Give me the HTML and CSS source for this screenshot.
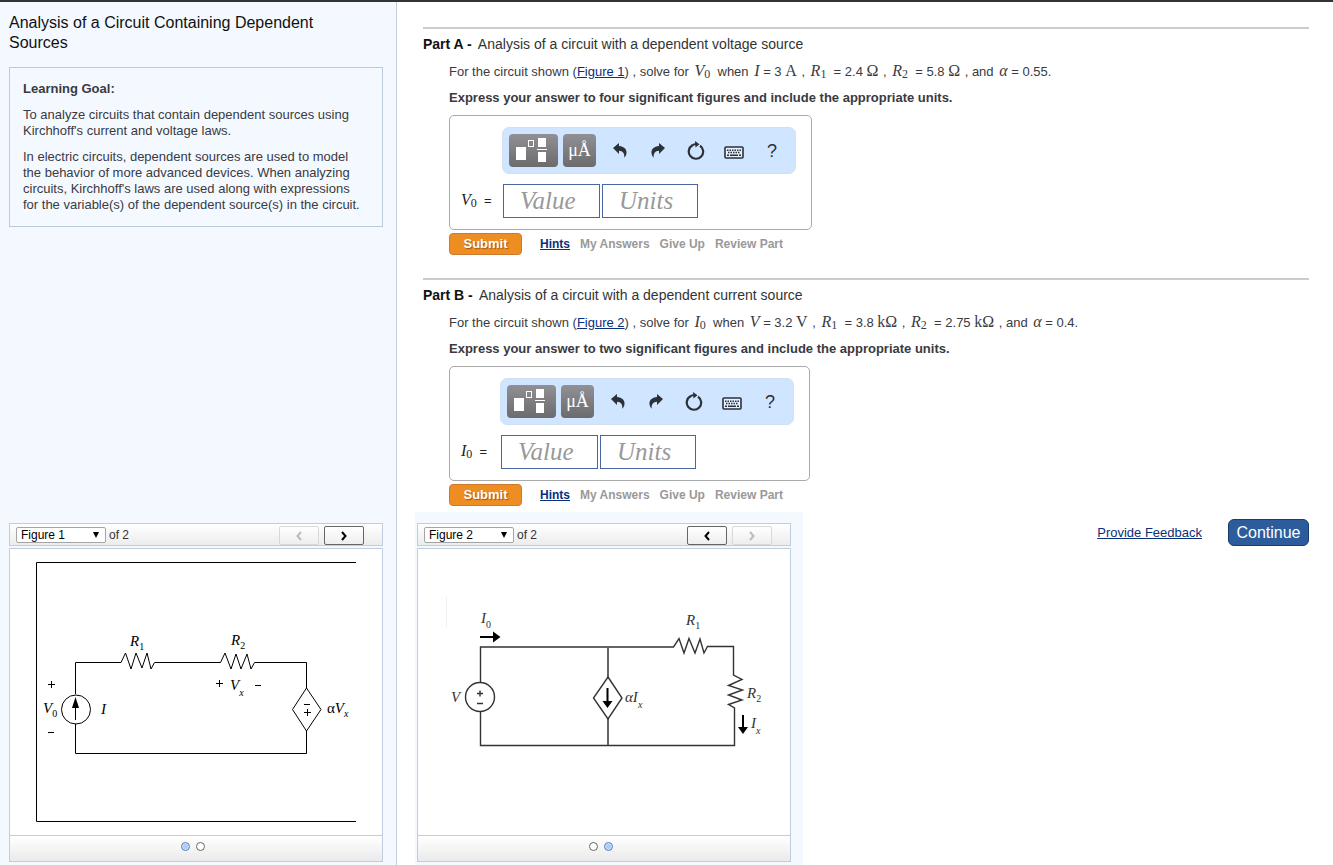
FILE: index.html
```html
<!DOCTYPE html>
<html lang="en">
<head>
<meta charset="utf-8">
<title>Analysis of a Circuit Containing Dependent Sources</title>
<link rel="stylesheet" href="styles.css">
</head>
<body>
<svg class="defs" aria-hidden="true">
  <symbol id="i-template" viewBox="0 0 49 33">
    <rect x="7" y="13" width="10" height="13" fill="#fff"/>
    <rect x="19.500" y="6.500" width="5" height="6" fill="none" stroke="#fff"/>
    <rect x="29" y="4" width="8" height="9" fill="#fff"/>
    <rect x="28" y="15" width="10" height="1" fill="#fff"/>
    <rect x="29" y="18" width="8" height="10" fill="#fff"/>
  </symbol>
  <symbol id="i-undo" viewBox="0 0 14 15"><path d="M0 5 6 0v3c5 .3 8 3.400 7.500 7-.2 2-1 3.500-2.300 4.800C11.800 10.500 10 8 6 7.800V11z"/></symbol>
  <symbol id="i-redo" viewBox="0 0 14 15"><path d="M14 5 8 0v3C3 3.300 0 6.400.5 10c.2 2 1 3.500 2.300 4.800C2.200 10.500 4 8 8 7.800V11z"/></symbol>
  <symbol id="i-reset" viewBox="0 0 18 19"><path d="M13 4.600A7.200 7.200 0 1 1 5.400 4.300" fill="none" stroke="#2c3138" stroke-width="2.200"/><path d="M5 4.600Q7 3.100 9.500 3.100" fill="none" stroke="#2c3138" stroke-width="2"/><path d="M8 0l4.500 3.200L8.500 6.500z"/></symbol>
  <symbol id="i-keys" viewBox="0 0 20 13"><rect x="1" y="1" width="18" height="11" rx="1" fill="#e4efff" stroke="#2c3138" stroke-width="1.600"/><path d="M3 4.300h14M4 6.500h12" stroke="#2c3138" stroke-width="1.400" stroke-dasharray="1.500 1"/><path d="M3 9.200h2m1 0h8m1 0h2" stroke="#2c3138" stroke-width="1.600"/></symbol>
  <symbol id="i-prev" viewBox="0 0 8 10"><path d="M6 1 2.500 5 6 9" fill="none" stroke="currentColor" stroke-width="2"/></symbol>
  <symbol id="i-next" viewBox="0 0 8 10"><path d="M2 1 5.500 5 2 9" fill="none" stroke="currentColor" stroke-width="2"/></symbol>
</svg>

<div class="page">
  <aside class="sidebar">
    <h1 class="title">Analysis of a Circuit Containing Dependent Sources</h1>
    <section class="goal">
      <h2>Learning Goal:</h2>
      <p>To analyze circuits that contain dependent sources using Kirchhoff's current and voltage laws.</p>
      <p>In electric circuits, dependent sources are used to model the behavior of more advanced devices. When analyzing circuits, Kirchhoff's laws are used along with expressions for the variable(s) of the dependent source(s) in the circuit.</p>
    </section>

    <section class="figure figure-side">
      <div class="figure-bar">
        <span class="picker"><select id="fig1" aria-label="Figure"><option>Figure 1</option><option>Figure 2</option></select><svg viewBox="0 0 6 6" aria-hidden="true"><path d="M0 0h6L3 6z"/></svg></span>
        <label for="fig1">of 2</label>
        <button class="nav" disabled aria-label="Previous figure"><svg><use href="#i-prev"/></svg></button>
        <button class="nav" aria-label="Next figure"><svg><use href="#i-next"/></svg></button>
      </div>
      <div class="figure-panel">
        <svg class="circuit" viewBox="10 549 372 286" role="img" aria-label="Circuit with a dependent voltage source">
          <g fill="none" stroke="#000" stroke-width="1">
            <path d="M356 562.500H36.500V821.500H356"/>
            <path d="M75.500 694V662.500H121L125.500 653 131 669 136 653 142 668 147 653 151 669 154.500 662.500H220.500L225 653 231 669 236 654 241 669 247 654 251 669 254.500 662.500H306.500V688M306.500 731V753.500H75.500V724"/>
            <circle cx="76" cy="709.500" r="14.500"/>
            <path d="M306.500 688 321 709.500 306.500 731 292.500 709.500z"/>
            <path d="M75.500 720V706M304 704.500h6M304 712.500h7M307.500 709v7M48 684.500h7M51.500 681v7M48 732.500h6M216 683.500h7M219.500 680v7M255 685.500h6"/>
          </g>
          <path d="M75.500 697 72 708h7z"/>
          <g class="sym">
            <text x="130" y="646">R<tspan class="sub" dy="4">1</tspan></text>
            <text x="231" y="645">R<tspan class="sub" dy="4">2</tspan></text>
            <text x="230" y="690">V<tspan class="subi" dy="6">x</tspan></text>
            <text x="43" y="713">V<tspan class="sub" dy="4">0</tspan></text>
            <text x="101" y="714">I</text>
            <text x="327" y="713"><tspan class="up">α</tspan>V<tspan class="subi" dy="4">x</tspan></text>
          </g>
        </svg>
        <div class="dots"><span class="dot on"></span><span class="dot"></span></div>
      </div>
    </section>
  </aside>

  <main class="main">
    <section class="part">
      <h2><b>Part A -</b> Analysis of a circuit with a dependent voltage source</h2>
      <p class="given">For the circuit shown (<a href="#fig1">Figure 1</a>) , solve for <var>V</var><sub>0</sub>&nbsp; when <var>I</var> = 3 <span class="unit">A</span> , <var>R</var><sub>1</sub>&nbsp; = 2.4 <span class="unit">Ω</span> , <var>R</var><sub>2</sub>&nbsp; = 5.8 <span class="unit">Ω</span> , and <var>α</var> = 0.55.</p>
      <p class="ask">Express your answer to four significant figures and include the appropriate units.</p>
      <div class="answer answer-wide">
        <div class="toolbar">
          <button class="tool wide" aria-label="Templates"><svg><use href="#i-template"/></svg></button>
          <button class="tool">μÅ</button>
          <button class="act" aria-label="Undo"><svg class="arrow"><use href="#i-undo"/></svg></button>
          <button class="act" aria-label="Redo"><svg class="arrow"><use href="#i-redo"/></svg></button>
          <button class="act" aria-label="Reset"><svg class="reset"><use href="#i-reset"/></svg></button>
          <button class="act" aria-label="Keyboard shortcuts"><svg class="keys"><use href="#i-keys"/></svg></button>
          <button class="act">?</button>
        </div>
        <label for="v0"><var>V</var><sub>0</sub>&nbsp; =</label>
        <div class="fields"><input id="v0" placeholder="Value"><input class="units" aria-label="Units" placeholder="Units"></div>
      </div>
      <div class="actions">
        <button class="submit">Submit</button>
        <a href="#">Hints</a><span>My Answers</span><span>Give Up</span><span>Review Part</span>
      </div>
    </section>

    <section class="part">
      <h2><b>Part B -</b> Analysis of a circuit with a dependent current source</h2>
      <p class="given">For the circuit shown (<a href="#fig2">Figure 2</a>) , solve for <var>I</var><sub>0</sub>&nbsp; when <var>V</var> = 3.2 <span class="unit">V</span> , <var>R</var><sub>1</sub>&nbsp; = 3.8 <span class="unit">kΩ</span> , <var>R</var><sub>2</sub>&nbsp; = 2.75 <span class="unit">kΩ</span> , and <var>α</var> = 0.4.</p>
      <p class="ask">Express your answer to two significant figures and include the appropriate units.</p>
      <div class="answer">
        <div class="toolbar">
          <button class="tool wide" aria-label="Templates"><svg><use href="#i-template"/></svg></button>
          <button class="tool">μÅ</button>
          <button class="act" aria-label="Undo"><svg class="arrow"><use href="#i-undo"/></svg></button>
          <button class="act" aria-label="Redo"><svg class="arrow"><use href="#i-redo"/></svg></button>
          <button class="act" aria-label="Reset"><svg class="reset"><use href="#i-reset"/></svg></button>
          <button class="act" aria-label="Keyboard shortcuts"><svg class="keys"><use href="#i-keys"/></svg></button>
          <button class="act">?</button>
        </div>
        <label for="i0"><var>I</var><sub>0</sub>&nbsp; =</label>
        <div class="fields"><input id="i0" placeholder="Value"><input class="units" aria-label="Units" placeholder="Units"></div>
      </div>
      <div class="actions">
        <button class="submit">Submit</button>
        <a href="#">Hints</a><span>My Answers</span><span>Give Up</span><span>Review Part</span>
      </div>
    </section>

    <div class="bottom">
      <section class="figure figure-main">
        <div class="figure-bar">
          <span class="picker"><select id="fig2" aria-label="Figure"><option>Figure 2</option><option>Figure 1</option></select><svg viewBox="0 0 6 6" aria-hidden="true"><path d="M0 0h6L3 6z"/></svg></span>
          <label for="fig2">of 2</label>
          <button class="nav" aria-label="Previous figure"><svg><use href="#i-prev"/></svg></button>
          <button class="nav" disabled aria-label="Next figure"><svg><use href="#i-next"/></svg></button>
        </div>
        <div class="figure-panel">
          <svg class="circuit" viewBox="418 549 372 286" role="img" aria-label="Circuit with a dependent current source">
            <path d="M446.500 597v30" stroke="#eee"/>
            <g fill="none" stroke="#333" stroke-width="1.400">
              <path d="M480.500 682V647H673.500L679 638.500 684 653 689 638.500 695 653 700 639 704 653 707.500 646.500H733.500V675L742 679.500 728.500 685.500 742.500 690 728.500 695 742 700 728.500 704.500 734.500 708V745.500H480.500V711"/>
              <path d="M608 647V677M608 719V745" stroke="#555" stroke-width="1.800"/>
              <circle cx="480" cy="697" r="14.500"/>
              <path d="M608 677 622 698 608 719 593.500 698z"/>
              <path d="M477 693.500h6M480 690.500v6M477 703.500h6"/>
            </g>
            <g stroke="#000" stroke-width="2"><path d="M480 637h14M607.500 688v14M743 715v14"/></g>
            <path d="M493 631.500l7.500 5.500-7.500 5.500zM602.500 701h10l-5 7zM738 727h10l-5 7z"/>
            <g class="sym gray">
              <text x="481" y="623">I<tspan class="sub" dy="5">0</tspan></text>
              <text x="686" y="625">R<tspan class="sub" dy="4">1</tspan></text>
              <text x="451" y="702">V</text>
              <text x="625" y="702">αI<tspan class="subi" dy="6">x</tspan></text>
              <text x="747" y="698">R<tspan class="sub" dy="4">2</tspan></text>
              <text x="751" y="728">I<tspan class="subi" dy="6">x</tspan></text>
            </g>
          </svg>
          <div class="dots"><span class="dot"></span><span class="dot on"></span></div>
        </div>
      </section>
      <div class="finish">
        <a href="#">Provide Feedback</a>
        <button class="continue">Continue</button>
      </div>
    </div>
  </main>
</div>
</body>
</html>
```

FILE: styles.css
```css
* { box-sizing: border-box; }
body {
  margin: 0;
  font: 13px/16px "Liberation Sans", Arial, sans-serif;
  color: #3a3a3f;
  background: #fff;
}
.defs { display: none; }
h1, h2, p { margin: 0; }
button { font: inherit; padding: 0; cursor: pointer; }
a { color: #0a2f7c; }
.page {
  display: flex;
  min-height: 100vh;
  border-top: 2px solid #333;
}

/* Sidebar */
.sidebar {
  flex: 0 0 397px;
  display: flex;
  flex-direction: column;
  padding: 11px 13px 3px 9px;
  background: #f4f9ff;
  border-right: 1px solid #c3cfdd;
}
.title {
  font-size: 16px;
  line-height: 20px;
  font-weight: normal;
  color: #111;
  padding-right: 20px;
  margin-bottom: 14px;
}
.goal {
  display: grid;
  gap: 10px;
  padding: 13px 20px 13px 13px;
  border: 1px solid #bccadb;
}
.goal h2 { font-size: 13px; line-height: 16px; }

/* Figures */
.figure { display: grid; gap: 2px; }
.figure-side { margin-top: auto; }
.figure-main {
  width: 388px;
  padding: 11px 12px 3px 2px;
  background: #f4f9ff;
}
.figure-bar {
  display: flex;
  align-items: center;
  height: 23px;
  padding: 0 18px 0 6px;
  gap: 5px;
  font-size: 12px;
  color: #333;
  border: 1px solid #bfcede;
  background: linear-gradient(#fff, #ececec);
}
.figure-bar label { flex: 1; }
.picker { position: relative; display: flex; margin-right: -2px; }
.picker svg { position: absolute; right: 7px; top: 5px; width: 6px; height: 6px; pointer-events: none; }
.picker select {
  appearance: none;
  width: 90px;
  height: 16px;
  padding: 0 4px;
  font: 12px/14px "Liberation Sans", Arial, sans-serif;
  color: #000;
  background: #fff;
  border: 1px solid #a5a5a5;
  border-radius: 2px;
}
.nav {
  display: grid;
  place-items: center;
  align-self: flex-end;
  width: 40px;
  height: 19px;
  color: #000;
  background: linear-gradient(#fff, #eee);
  border: 1px solid #666;
  border-radius: 2px;
}
.nav:disabled { color: #bbb; border-color: #d8d8d8; }
.nav svg { width: 8px; height: 10px; }
.figure-panel { border: 1px solid #bfcede; background: #fff; }
.circuit { display: block; width: 100%; height: auto; }
.sym { font: italic 15px "Liberation Serif", "Times New Roman", serif; fill: #000; }
.gray { fill: #333; }
.sub { font-size: 10px; font-style: normal; }
.subi { font-size: 10px; }
.up { font-style: normal; }
.dots {
  display: flex;
  justify-content: center;
  gap: 6px;
  padding: 6px 6px 10px 0;
  border-top: 1px solid #bfcede;
  background: linear-gradient(#fff, #eaeaea);
}
.dot { width: 9px; height: 9px; border: 1px solid #666; border-radius: 50%; background: #fff; }
.dot.on { border-color: #5f83b5; background: #a9cdfa; box-shadow: inset 0 0 0 1px #d4e5fb; }

/* Main column */
.main {
  flex: 1;
  display: flex;
  flex-direction: column;
  padding: 25px 24px 0 26px;
}
.part {
  border-top: 2px solid #ccc;
  padding-top: 5px;
  margin-bottom: 23px;
}
.part:nth-of-type(2) { margin-bottom: 6px; }
.part h2 { font-size: 14px; line-height: 20px; font-weight: normal; color: #333; }
.part h2 b { color: #111; margin-right: 3px; }
.part p { margin-left: 26px; line-height: 20px; }
.part .given { margin-top: 8px; }
.part .ask { margin-top: 6px; margin-bottom: 7px; font-weight: bold; }
var, sub, .unit { font-family: "Liberation Serif", "Times New Roman", serif; line-height: 0; }
var, .unit { font-size: 16px; }
.given var { margin-left: 2px; }
.given .unit { margin-right: 1px; }
sub { font-size: 12px; vertical-align: -2px; }

.answer {
  --label: 39px;
  display: grid;
  grid-template-columns: var(--label) auto;
  row-gap: 10px;
  align-items: center;
  width: fit-content;
  margin-left: 26px;
  padding: 11px 15px 11px 11px;
  border: 1px solid #aaa;
  border-radius: 5px;
}
.answer-wide { --label: 41px; }
.answer label { color: #222; }
.toolbar {
  grid-column: 2;
  display: flex;
  align-items: center;
  width: 294px;
  height: 47px;
  padding-left: 6px;
  background: #d0e5ff;
  border: 1px solid #d3e0f0;
  border-radius: 7px;
}
.tool {
  width: 33px;
  height: 33px;
  margin-right: 5px;
  font: 18px/33px "Liberation Serif", "Times New Roman", serif;
  color: #fff;
  background: linear-gradient(#919195, #6b6b6e);
  border: 0;
  border-radius: 4px;
}
.tool.wide { width: 49px; }
.tool svg { display: block; width: 49px; height: 33px; }
.act {
  display: grid;
  place-items: center;
  width: 38px;
  height: 33px;
  font-size: 18px;
  color: #2c3138;
  background: none;
  border: 0;
}
.act svg { fill: #2c3138; }
.arrow { width: 14px; height: 15px; }
.reset { width: 18px; height: 19px; }
.keys { width: 20px; height: 13px; margin-top: 4px; }
.fields { display: flex; gap: 2px; padding-left: 1px; }
.fields input {
  width: 97px;
  height: 34px;
  padding: 0 0 0 16px;
  font: italic 25px "Liberation Serif", "Times New Roman", serif;
  border: 1px solid #46679f;
  background: #fff;
}
.fields .units { width: 96px; }
.fields input::placeholder { color: #999; }

.actions {
  display: flex;
  align-items: center;
  gap: 10px;
  margin: 3px 0 0 26px;
  font-size: 12px;
  font-weight: bold;
  color: #999;
}
.submit {
  width: 73px;
  height: 22px;
  margin-right: 8px;
  font-size: 13px;
  color: #fff;
  text-shadow: 1px 1px 1px #9a5a10;
  background: #ee8d22;
  border: 1px solid #cc7a30;
  border-radius: 4px;
}

.bottom {
  flex: 1;
  display: flex;
  justify-content: space-between;
  align-items: stretch;
  margin-left: -8px;
}
.finish {
  display: flex;
  align-items: center;
  align-self: flex-start;
  gap: 26px;
  margin-top: 7px;
}
.continue {
  width: 81px;
  height: 27px;
  font-size: 16px;
  color: #fff;
  background: #2d5c9d;
  border: 1px solid #193c69;
  border-radius: 6px;
}
```
